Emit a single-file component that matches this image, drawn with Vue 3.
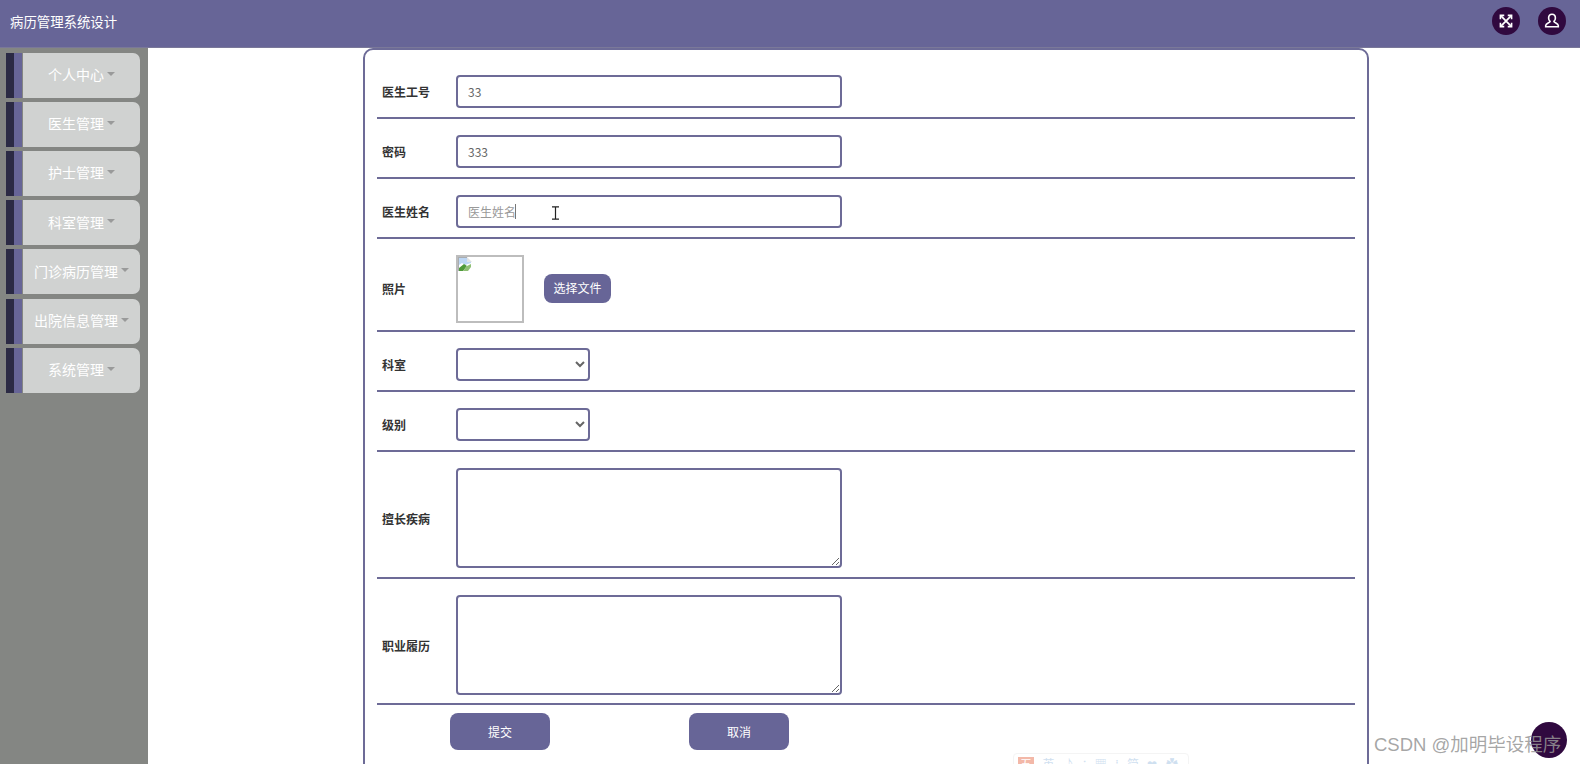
<script setup>
const menus = ['个人中心', '医生管理', '护士管理', '科室管理', '门诊病历管理', '出院信息管理', '系统管理']
</script>

<template>
  <div class="page">
    <header class="top">
      <div class="title">病历管理系统设计</div>
      <div class="tools">
        <span class="round">
          <svg width="14" height="14" viewBox="0 0 16 16" fill="none" stroke="#fff" stroke-width="2">
            <path d="M2.500 2.500 13.500 13.500M13.500 2.500 2.500 13.500" />
            <path d="M1.600 6V1.600H6M10 1.600h4.400V6M1.600 10v4.400H6M10 14.400h4.400V10" stroke-width="1.800" />
          </svg>
        </span>
        <span class="round">
          <svg width="16" height="16" viewBox="0 0 16 16" fill="none" stroke="#fff" stroke-width="1.600">
            <path d="M8 1.200c2.200 0 3.400 1.600 3.400 3.700 0 1.500-.7 2.800-1.500 3.500 0 1.100 4.400 1.900 4.400 4.100v1.200H1.700v-1.200c0-2.200 4.400-3 4.400-4.100C5.300 7.700 4.600 6.400 4.600 4.900 4.600 2.800 5.800 1.200 8 1.200z" />
          </svg>
        </span>
      </div>
    </header>

    <div class="body">
      <aside class="side">
        <div v-for="m in menus" :key="m" class="menu">
          <i class="strip dark"></i>
          <i class="strip light"></i>
          <div class="btn"><span>{{ m }}</span><b class="caret"></b></div>
        </div>
      </aside>

      <main class="main">
        <form class="card">
          <div class="row">
            <label>医生工号</label>
            <input class="field" value="33" />
          </div>
          <div class="row">
            <label>密码</label>
            <input class="field" value="333" />
          </div>
          <div class="row">
            <label>医生姓名</label>
            <div class="wrap">
              <input class="field" placeholder="医生姓名" />
              <i class="text-caret"></i>
              <svg class="ibeam" width="9" height="14" viewBox="0 0 9 14" fill="none" stroke="#222" stroke-width="1.2">
                <path d="M1 .8h7M1 13.200h7M4.500 .8v12.400" />
              </svg>
            </div>
          </div>
          <div class="row photo">
            <label>照片</label>
            <div class="thumb">
              <svg width="14" height="14" viewBox="0 0 14 14">
                <path d="M0 0h9l5 5v9H0z" fill="#fff" />
                <path d="M0 0h9v1H1v13H0z" fill="#a9adb0" />
                <path d="M9 0l5 5H9z" fill="#dfe2e4" />
                <path d="M1 1h8v4h4v1L7 8 4 6 1 8z" fill="#bcd6f4" />
                <path d="M1 14v-3l5-4 3 2-4 5z" fill="#4f9a3a" />
                <path d="M5 14l4-5 4-2v3l-3 4z" fill="#8fbf75" />
              </svg>
            </div>
            <button type="button" class="pick">选择文件</button>
          </div>
          <div class="row">
            <label>科室</label>
            <select class="pickbox"><option></option></select>
          </div>
          <div class="row">
            <label>级别</label>
            <select class="pickbox"><option></option></select>
          </div>
          <div class="row">
            <label>擅长疾病</label>
            <textarea class="area"></textarea>
          </div>
          <div class="row last">
            <label>职业履历</label>
            <textarea class="area"></textarea>
          </div>
          <div class="actions">
            <button type="button" class="act">提交</button>
            <button type="button" class="act">取消</button>
          </div>
        </form>
      </main>
    </div>

    <div class="ime">
      <span class="ime-s">五</span><span>英</span><span>♪</span><span>⁝</span><span>▦</span><span>⁞</span><span>简</span><span>❤</span><span>✿</span>
    </div>
    <span class="float"></span>
    <div class="mark">CSDN @加明毕设程序</div>
  </div>
</template>

<style>
html, body { margin: 0; padding: 0; background: #fff; }
</style>

<style scoped>
* { box-sizing: border-box; }
.page {
  position: relative;
  width: 1580px;
  height: 764px;
  overflow: hidden;
  font-family: "Noto Sans CJK SC", "Liberation Sans", sans-serif;
}
.top {
  height: 48px;
  background: #676597;
  border-bottom: 1px solid #7a7899;
  display: flex;
  align-items: center;
  justify-content: space-between;
  padding: 0 14px 5px 10px;
  color: #fff;
}
.title { font-size: 13.4px; }
.tools { display: flex; gap: 18px; }
.round {
  width: 28px;
  height: 28px;
  border-radius: 50%;
  background: #30093f;
  display: flex;
  align-items: center;
  justify-content: center;
}
.body { display: flex; height: 716px; }
.side {
  width: 148px;
  background: #848683;
  padding: 4.6px 8px 0 6px;
  display: flex;
  flex-direction: column;
  gap: 4.2px;
  flex: none;
}
.menu { display: flex; height: 45px; }
.strip { width: 8px; display: block; flex: none; }
.dark { background: #2b2a44; }
.light { background: #676597; }
.btn {
  flex: 1;
  background: #d0d2d1;
  border-radius: 0 7px 7px 0;
  color: #fff;
  font-size: 14px;
  display: flex;
  align-items: center;
  justify-content: center;
  padding-bottom: 2px;
  gap: 3px;
  margin-left: 1px;
}
.caret {
  width: 0;
  height: 0;
  border-left: 4.5px solid transparent;
  border-right: 4.5px solid transparent;
  border-top: 4.5px solid #999a9a;
  margin-bottom: 1px;
}
.main { flex: 1; padding-left: 215px; min-width: 0; }
.card {
  width: 1006px;
  height: 760px;
  border: 2px solid #6d6b97;
  border-radius: 10px;
  padding: 9px 12px 0;
}
.row {
  display: flex;
  align-items: center;
  border-bottom: 2px solid #6d6b97;
  padding: 16px 0 9px;
}
.row.last { padding-bottom: 8px; }
.row label {
  width: 79px;
  padding-left: 5px;
  font-size: 12px;
  font-weight: 700;
  color: #333;
  flex: none;
}
.wrap { position: relative; width: 386px; }
.field, .pickbox, .area {
  border: 2px solid #6d6b97;
  border-radius: 4px;
  background: #fff;
  outline: none;
  font-family: "Noto Sans CJK SC", "Liberation Sans", sans-serif;
  font-size: 12px;
  color: #666;
}
.field {
  width: 386px;
  height: 33px;
  padding: 0 10px;
  display: block;
}
.field::placeholder { color: #999; }
.text-caret {
  position: absolute;
  left: 59px;
  top: 9px;
  width: 1px;
  height: 15px;
  background: #777;
}
.ibeam { position: absolute; left: 95px; top: 11px; }
.pickbox { width: 134px; height: 33px; }
.area {
  width: 386px;
  height: 100px;
  display: block;
  padding: 6px 10px;
}
.photo { padding-bottom: 8px; }
.thumb {
  width: 68px;
  height: 68px;
  border: 2px solid #bdbdbd;
  line-height: 0;
  margin-bottom: -1px;
}
.pick {
  margin-left: 20px;
  width: 67px;
  height: 29px;
  margin-top: -1px;
  border: 0;
  border-radius: 8px;
  background: #676597;
  color: #fff;
  font-family: inherit;
  font-size: 12px;
  padding: 0 0 1px;
}
.actions {
  display: flex;
  gap: 139px;
  padding: 8px 0 0 73px;
}
.act {
  width: 100px;
  height: 37px;
  border: 0;
  border-radius: 8px;
  background: #676597;
  color: #fff;
  font-family: inherit;
  font-size: 12px;
  padding: 0;
}
.ime {
  position: absolute;
  left: 1013px;
  top: 753px;
  width: 176px;
  height: 24px;
  border: 1px solid #f4f4f4;
  border-radius: 4px;
  display: flex;
  justify-content: space-between;
  padding: 3px 10px 3px 4px;
  font-size: 12px;
  line-height: 14px;
  color: #cfe0f0;
  background: #fff;
}
.ime-s { background: #f3b8a8; color: #fff; width: 16px; text-align: center; }
.float {
  position: absolute;
  left: 1531px;
  top: 722px;
  width: 36px;
  height: 36px;
  border-radius: 50%;
  background: #30093f;
}
.mark {
  position: absolute;
  left: 1374px;
  top: 731px;
  font-family: "Liberation Sans", "Noto Sans CJK SC", sans-serif;
  font-size: 18.5px;
  line-height: 28px;
  color: rgba(150, 150, 150, .85);
  white-space: nowrap;
}
</style>
